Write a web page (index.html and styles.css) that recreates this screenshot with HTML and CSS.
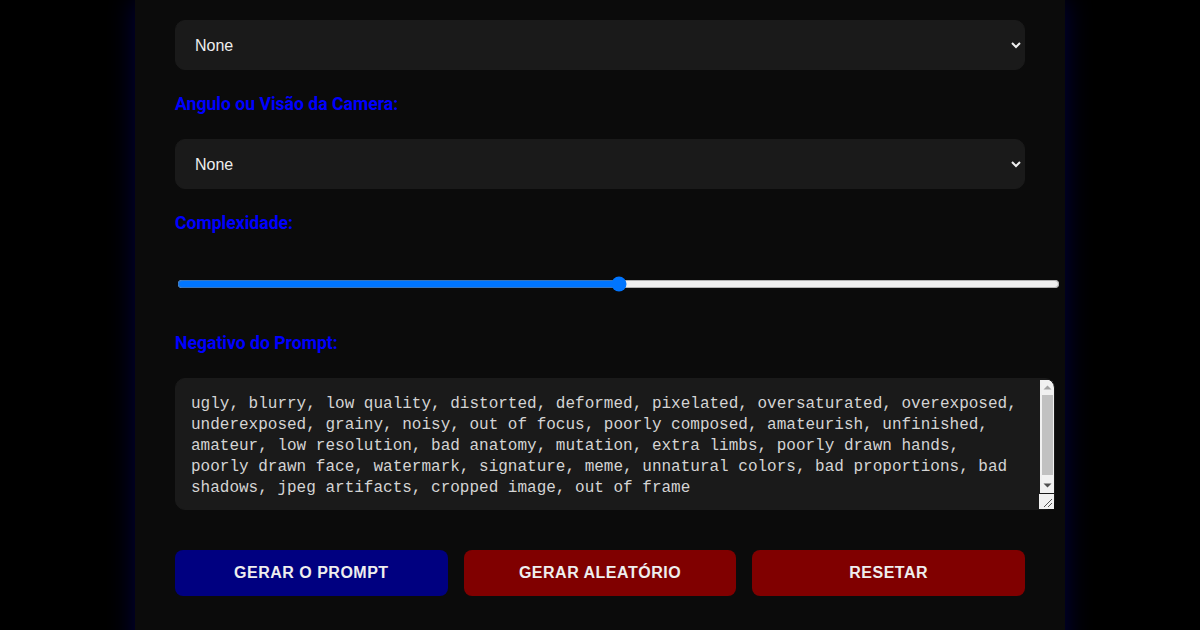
FILE: index.html
```html
<!DOCTYPE html>
<html lang="pt-BR">
<head>
  <meta charset="UTF-8" />
  <meta name="viewport" content="width=device-width, initial-scale=1.0"/>
  <title>Gerador de Prompt</title>
  <link rel="stylesheet" href="styles.css">
</head>
<body>

  <main class="container">
    <form class="prompt-form" onsubmit="return false;">
      <select id="estilo" class="field">
        <option>None</option>
      </select>

      <label for="angulo">Angulo ou Visão da Camera:</label>
      <select id="angulo" class="field">
        <option>None</option>
      </select>

      <label for="complexidade">Complexidade:</label>
      <input type="range" id="complexidade" class="slider" min="0" max="100" value="50">

      <label for="negativo">Negativo do Prompt:</label>
      <textarea id="negativo" class="negative" rows="5">ugly, blurry, low quality, distorted, deformed, pixelated, oversaturated, overexposed, underexposed, grainy, noisy, out of focus, poorly composed, amateurish, unfinished, amateur, low resolution, bad anatomy, mutation, extra limbs, poorly drawn hands, poorly drawn face, watermark, signature, meme, unnatural colors, bad proportions, bad shadows, jpeg artifacts, cropped image, out of frame</textarea>

      <div class="actions">
        <button type="button" class="btn btn-generate">Gerar o Prompt</button>
        <button type="button" class="btn btn-random">Gerar Aleatório</button>
        <button type="button" class="btn btn-reset" onclick="resetForm()">Resetar</button>
      </div>
    </form>
  </main>

  <script>
    // Reset
    function resetForm() {
      document.querySelectorAll('select').forEach(sel => sel.selectedIndex = 0);
      document.getElementById('complexidade').value = 50;
    }
  </script>
</body>
</html>
```

FILE: styles.css
```css
body {
  font-family: Roboto, Arial, sans-serif;
  margin: 0;
  background: #000;
  color: #eee;
}

.container {
  width: 850px;
  margin: 0 auto;
  padding: 20px 40px 40px;
  background: #0b0b0b;
  box-shadow: 0 0 25px rgba(0, 0, 255, 0.25);
  min-height: 640px;
}

.prompt-form {
  display: flex;
  flex-direction: column;
  align-items: flex-start;
}

.prompt-form label {
  display: block;
  font-size: 17.6px;
  font-weight: bold;
  line-height: 23px;
  color: #0000ff;
  margin-bottom: 23px;
}

.field {
  width: 100%;
  height: 50px;
  padding: 0 15px;
  font-family: "Liberation Sans", Arial, sans-serif;
  font-size: 16px;
  color: #eee;
  background: #1a1a1a;
  border: 1px solid #1a1a1a;
  border-radius: 10px;
  margin-bottom: 23px;
}

.slider {
  display: block;
  width: calc(100% + 33px);
  margin: 18px 2px 40px;
  accent-color: #0075ff;
}

/* the scrollbar strip is painted as background layers */
.negative {
  box-sizing: border-box;
  width: calc(100% + 30px);
  height: 132px;
  padding: 15px 30px 13px 15px;
  font-family: "Liberation Mono", "Courier New", monospace;
  font-size: 16px;
  line-height: 21px;
  color: #d4d4d4;
  border: 1px solid #1a1a1a;
  border-radius: 10px;
  overflow: hidden;
  margin: 0 0 40px;
  background-color: #1a1a1a;
  background-origin: border-box;
  background-repeat: no-repeat;
  background-image:
    url("data:image/svg+xml;utf8,<svg xmlns='http://www.w3.org/2000/svg' width='15' height='15'><polygon points='3.5,9.5 7.5,5.5 11.5,9.5' fill='%23a3a3a3'/></svg>"),
    url("data:image/svg+xml;utf8,<svg xmlns='http://www.w3.org/2000/svg' width='15' height='15'><polygon points='3.5,5.5 11.5,5.5 7.5,9.5' fill='%23505050'/></svg>"),
    linear-gradient(#c1c1c1, #c1c1c1),
    linear-gradient(#f1f1f1, #f1f1f1);
  background-size: 15px 15px, 15px 15px, 11px 80px, 15px 113px;
  background-position: right 0 top 2px, right 0 top 100px, right 2px top 17px, right 0 top 2px;
}

.negative::-webkit-resizer {
  background-color: #f1f1f1;
  background-image: url("data:image/svg+xml;utf8,<svg xmlns='http://www.w3.org/2000/svg' width='15' height='15'><path d='M13 5 L5 13 M13 9 L9 13' stroke='%23555' stroke-width='1'/></svg>");
}

.actions {
  display: grid;
  grid-template-columns: repeat(3, 1fr);
  gap: 16px;
  width: 100%;
}

.btn {
  height: 46px;
  border: none;
  border-radius: 8px;
  font-family: "Liberation Sans", Arial, sans-serif;
  font-size: 16px;
  font-weight: bold;
  letter-spacing: 0.5px;
  text-transform: uppercase;
  color: #eee;
  cursor: pointer;
}

.btn-generate {
  background: #000080;
}

.btn-random,
.btn-reset {
  background: #800000;
}

.btn:hover {
  filter: brightness(1.2);
}
```
